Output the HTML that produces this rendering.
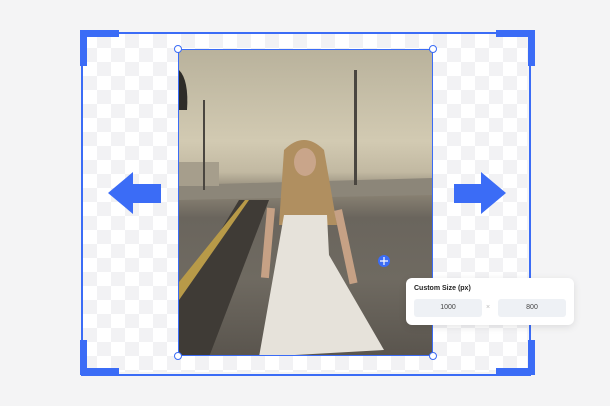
<!DOCTYPE html>
<html><head><style>
body{margin:0;width:610px;height:406px;background:#f3f3f4;position:relative;overflow:hidden;font-family:"Liberation Sans",sans-serif}
.card{position:absolute;left:0;top:0;width:610px;height:406px;background:#f4f4f5}
.check{position:absolute;left:83px;top:34px;width:444px;height:338px;background-color:#fff;
background-image:linear-gradient(45deg,#f2f2f4 25%,transparent 25%,transparent 75%,#f2f2f4 75%),linear-gradient(45deg,#f2f2f4 25%,transparent 25%,transparent 75%,#f2f2f4 75%);
background-size:28px 28px;background-position:0 0,14px 14px}
.frame{position:absolute;left:81px;top:32px;width:446px;height:340px;border:2px solid #3b6cf6}
.b{position:absolute;background:#3b6cf6}
.photo{position:absolute;left:178px;top:49px;width:255px;height:307px;border:1px solid #3b6cf6;box-sizing:border-box;overflow:hidden;
background:linear-gradient(180deg,#b9b29c 0%,#d2cab2 30%,#c2b9a2 40%,#8e8676 46%,#6a655d 55%,#6f6a61 75%,#5a554e 100%)}
.h{position:absolute;width:8px;height:8px;border:1px solid #3b6cf6;background:#fff;border-radius:50%;box-sizing:border-box}
.pop{position:absolute;left:406px;top:278px;width:168px;height:47px;background:#fff;border-radius:6px;box-shadow:0 2px 8px rgba(0,0,0,.1)}
.pop .t{position:absolute;left:8px;top:7px;font-size:7px;font-weight:bold;color:#222}
.in{position:absolute;top:21px;width:68px;height:18px;background:#eef1f5;border-radius:3px;font-size:7px;color:#444;text-align:center;line-height:18px}
</style></head><body>
<div class="card"></div>
<div class="check"></div>
<div class="frame"></div>
<div class="b" style="left:80px;top:30px;width:39px;height:7px"></div>
<div class="b" style="left:80px;top:30px;width:7px;height:36px"></div>
<div class="b" style="left:496px;top:30px;width:39px;height:7px"></div>
<div class="b" style="left:528px;top:30px;width:7px;height:36px"></div>
<div class="b" style="left:80px;top:368px;width:39px;height:7px"></div>
<div class="b" style="left:80px;top:340px;width:7px;height:35px"></div>
<div class="b" style="left:496px;top:368px;width:39px;height:7px"></div>
<div class="b" style="left:528px;top:340px;width:7px;height:35px"></div>
<svg style="position:absolute;left:0;top:0" width="610" height="406">
<polygon points="108,193 133,172 133,184 161,184 161,203 133,203 133,214" fill="#3b6cf6"/>
<polygon points="506,193 481,172 481,184 454,184 454,203 481,203 481,214" fill="#3b6cf6"/>
</svg>
<div class="photo">
<svg width="255" height="307" style="position:absolute;left:0;top:0">
<polygon points="0,135 255,128 255,145 0,150" fill="#8c8679"/>
<polygon points="0,250 60,150 90,150 30,307 0,307" fill="#3f3b36"/>
<polygon points="0,232 66,150 70,150 0,250" fill="#b89a48"/>
<rect x="0" y="112" width="40" height="24" fill="#a69e8c"/>
<rect x="24" y="50" width="2" height="90" fill="#4a4640"/>
<rect x="175" y="20" width="3" height="115" fill="#4a4640"/>
<path d="M0 20 Q10 30 8 60 L0 60Z" fill="#2e2c28"/>
<path d="M105 100 Q125 80 145 100 L158 175 L100 175Z" fill="#b08f60"/>
<ellipse cx="126" cy="112" rx="11" ry="14" fill="#c9a58a"/>
<rect x="88" y="158" width="8" height="70" fill="#c6a185" transform="rotate(5 92 158)"/>
<rect x="155" y="160" width="8" height="75" fill="#c6a185" transform="rotate(-12 159 160)"/>
<path d="M105 165 L148 165 L150 205 L205 300 L80 307 L98 205Z" fill="#e6e2da"/>
</svg>
</div>
<div class="h" style="left:174px;top:45px"></div>
<div class="h" style="left:429px;top:45px"></div>
<div class="h" style="left:174px;top:352px"></div>
<div class="h" style="left:429px;top:352px"></div>
<svg style="position:absolute;left:377px;top:254px" width="14" height="14"><circle cx="7" cy="7" r="6" fill="#3b6cf6"/><path d="M7 3V11M3 7H11" stroke="#fff" stroke-width="1.2"/></svg>
<div class="pop"><div class="t">Custom Size (px)</div>
<div class="in" style="left:8px">1000</div>
<div style="position:absolute;left:80px;top:21px;line-height:18px;font-size:7px;color:#bbb">×</div>
<div class="in" style="left:92px">800</div></div>
</body></html>
